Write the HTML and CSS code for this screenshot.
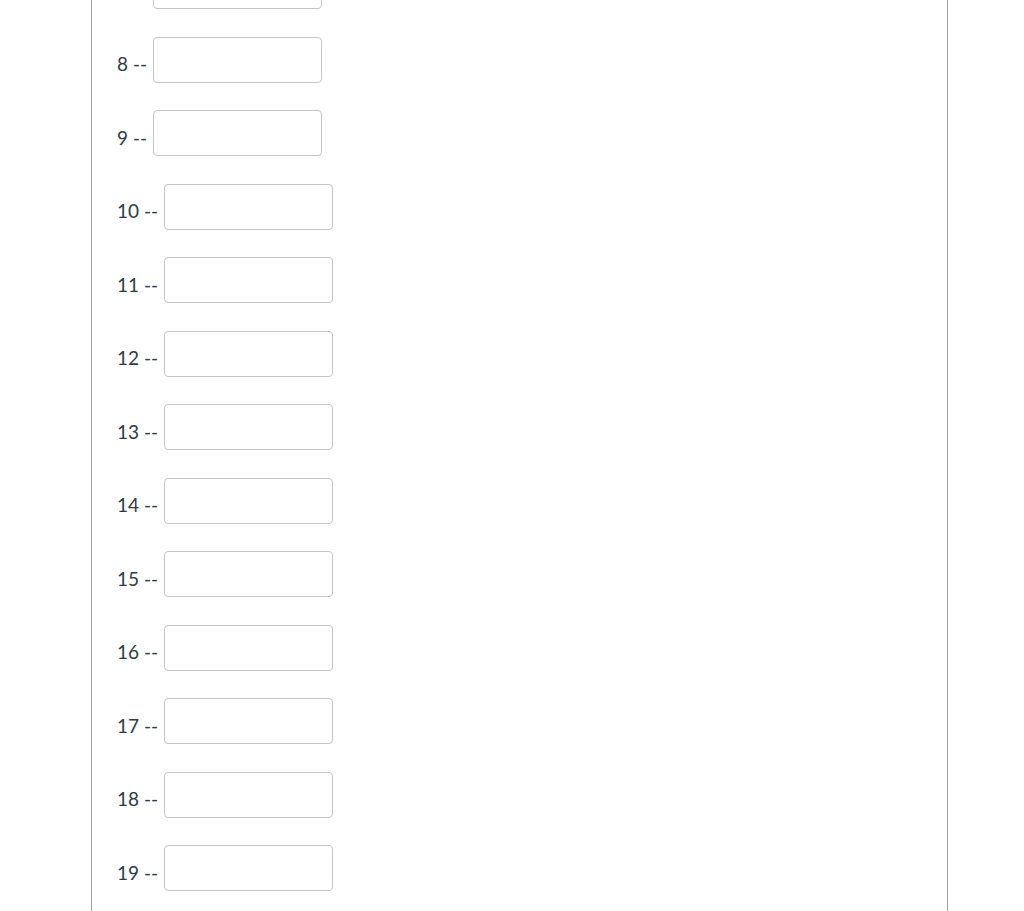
FILE: index.html
```
<!DOCTYPE html>
<html>
<head>
    <title>Answers</title>
    <link rel="stylesheet" href="styles.css">
    <meta charset="UTF-8">
    <meta name="viewport" content="width=device-width, initial-scale=1.0">
</head>
<body class="page">
    <div class="answer-box">
        <div class="answer-row"><span class="answer-label answer-label-blank"></span><input class="answer-input" type="text"></div>
        <div class="answer-row"><span class="answer-label">8 --</span><input class="answer-input" type="text"></div>
        <div class="answer-row"><span class="answer-label">9 --</span><input class="answer-input" type="text"></div>
        <div class="answer-row"><span class="answer-label">10 --</span><input class="answer-input" type="text"></div>
        <div class="answer-row"><span class="answer-label">11 --</span><input class="answer-input" type="text"></div>
        <div class="answer-row"><span class="answer-label">12 --</span><input class="answer-input" type="text"></div>
        <div class="answer-row"><span class="answer-label">13 --</span><input class="answer-input" type="text"></div>
        <div class="answer-row"><span class="answer-label">14 --</span><input class="answer-input" type="text"></div>
        <div class="answer-row"><span class="answer-label">15 --</span><input class="answer-input" type="text"></div>
        <div class="answer-row"><span class="answer-label">16 --</span><input class="answer-input" type="text"></div>
        <div class="answer-row"><span class="answer-label">17 --</span><input class="answer-input" type="text"></div>
        <div class="answer-row"><span class="answer-label">18 --</span><input class="answer-input" type="text"></div>
        <div class="answer-row"><span class="answer-label">19 --</span><input class="answer-input" type="text"></div>
    </div>
</body>
</html>
```

FILE: styles.css
```
.page {
margin: 0;
background: #ffffff;
font-family: Lato, "Liberation Sans", sans-serif;
color: #2d3b45;
overflow: hidden;
}

.answer-box {
margin-left: 91px;
margin-top: -37px;
padding: 0 25px 40px;
box-sizing: border-box;
width: 857px;
border: 1px solid #a0a0a0;
border-top: none;
display: flex;
flex-direction: column;
gap: 27.5px;
}

.answer-row {
display: flex;
align-items: center;
}

.answer-label {
font-size: 19px;
padding-top: 8px;
margin-right: 6px;
}

.answer-label-blank {
width: 30px;
}

.answer-input {
width: 169px;
height: 46px;
box-sizing: border-box;
border: 1px solid #c4c4c4;
border-radius: 4px;
padding: 0 8px;
font-family: inherit;
font-size: 16px;
background: #ffffff;
margin: 0;
}
```
